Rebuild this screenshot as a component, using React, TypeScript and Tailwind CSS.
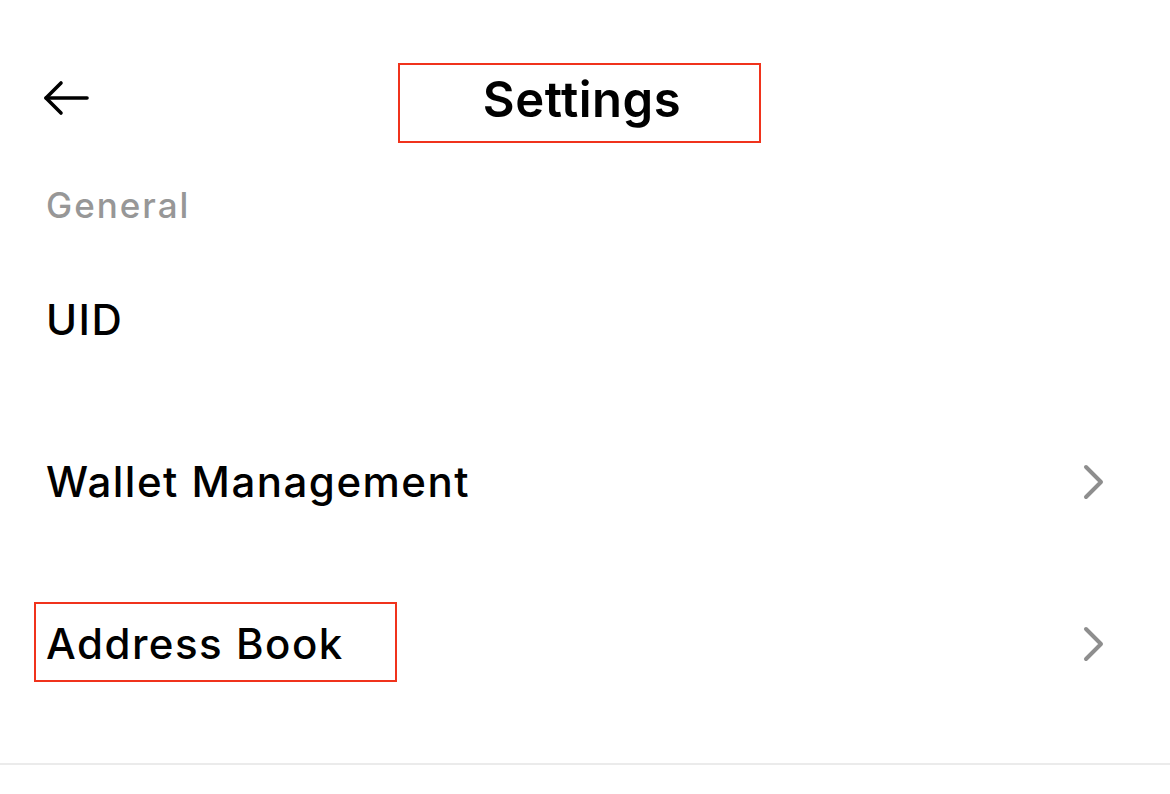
const rows = [
  { label: "UID", arrow: false, boxed: false },
  { label: "Wallet Management", arrow: true, boxed: false },
  { label: "Address Book", arrow: true, boxed: true },
];

function Chevron() {
  return (
    <svg width="24" height="38" viewBox="0 0 24 38" fill="none" stroke="#8e8e8e" strokeWidth="4" strokeLinecap="round" strokeLinejoin="round">
      <path d="M4 4l15 15-15 15" />
    </svg>
  );
}

export default function App() {
  return (
    <div className="h-[794px] w-[1170px] overflow-hidden bg-white font-['Inter','Liberation_Sans',sans-serif] text-black">
      <header className="relative h-[188px]">
        <button className="absolute left-[43px] top-[80px] flex h-[36px] w-[48px] items-center" aria-label="Back">
          <svg width="46" height="36" viewBox="0 0 46 36" fill="none" stroke="black" strokeWidth="3.6" strokeLinecap="round" strokeLinejoin="round">
            <path d="M44 18H3" />
            <path d="M18 3L3 18l15 15" />
          </svg>
        </button>
        <div className="absolute left-[398px] top-[63px] flex h-[80px] w-[363px] items-center justify-center border-2 border-[#f0331c] pb-[8px] pl-[5px]">
          <h1 className="text-[49px] font-semibold leading-none tracking-[0.5px]">Settings</h1>
        </div>
      </header>

      <div className="px-[46px] text-[35px] font-medium leading-none tracking-[2px] text-[#979797]">General</div>

      <ul className="mt-[16px]">
        {rows.map((row) => (
          <li key={row.label} className="flex h-[162px] items-center justify-between pl-[46px] pr-[64px]">
            <span
              className={
                row.boxed
                  ? "-ml-[12px] -mt-[4px] flex h-[80px] w-[363px] items-center border-2 border-[#f0331c] pl-[10px] pt-[4px] text-[42px] font-medium leading-none tracking-[1.5px]"
                  : "text-[42px] font-medium leading-none tracking-[1.5px]"
              }
            >
              {row.label}
            </span>
            {row.arrow ? <Chevron /> : null}
          </li>
        ))}
      </ul>

      <div className="mt-[38px] h-[2px] bg-[#ebebeb]" />
    </div>
  );
}
